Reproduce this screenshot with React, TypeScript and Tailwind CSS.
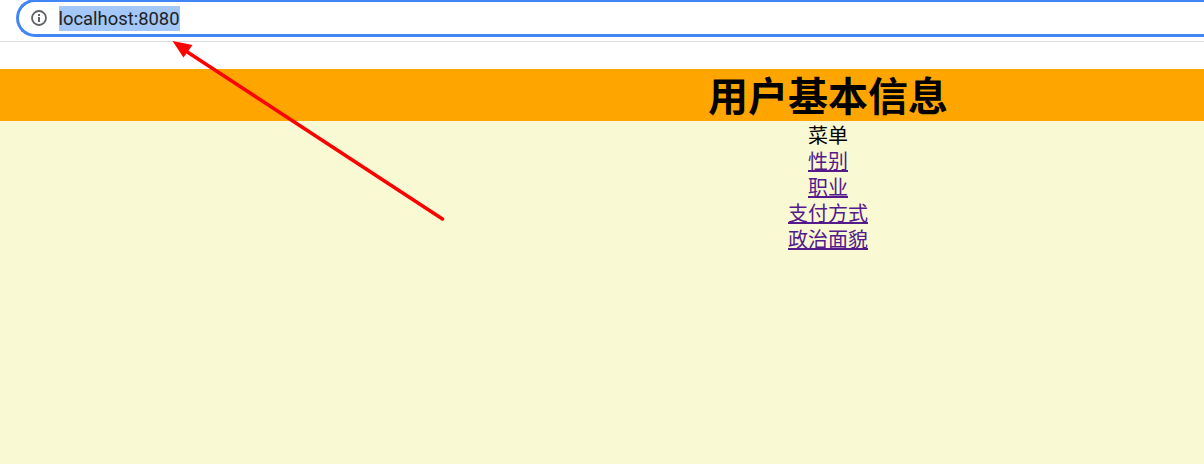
export default function App() {
  const cjk = { fontFamily: '"Liberation Sans", "Noto Sans CJK SC", sans-serif' };
  return (
    <div className="relative flex h-[464px] w-[1204px] flex-col overflow-hidden bg-white" style={cjk}>
      <div className="h-[42px] shrink-0 border-b border-[#dadce0]">
        <div className="ml-[16px] -mt-px flex h-[38px] items-center rounded-l-[19px] border-[3px] border-r-0 border-[#4285f4] pl-[10.5px]">
          <svg width="18" height="18" viewBox="0 0 18 18" fill="none" className="shrink-0">
            <circle cx="9" cy="9" r="7" stroke="#5f6368" strokeWidth="1.8" />
            <rect x="8" y="8" width="2" height="5" fill="#5f6368" />
            <rect x="8" y="5" width="2" height="2" fill="#5f6368" />
          </svg>
          <span className="ml-[11px] bg-[#a3c7f7] text-[18.4px] leading-[25px] text-[#202124]" style={{ fontFamily: '"Roboto", sans-serif' }}>
            localhost:8080
          </span>
        </div>
      </div>
      <div className="h-[27px] shrink-0" />
      <div className="flex h-[52px] shrink-0 items-center justify-center bg-[#ffa500] pt-[4px] pl-[452px]">
        <h1 className="text-[40px] leading-[48px] font-bold text-black">用户基本信息</h1>
      </div>
      <div className="flex flex-1 flex-col items-center bg-[#f9f9d3] pt-[2px] pl-[452px] text-[20px] leading-[26px] text-black">
        <div>菜单</div>
        <a href="#" className="text-[#551a8b] underline">性别</a>
        <a href="#" className="text-[#551a8b] underline">职业</a>
        <a href="#" className="text-[#551a8b] underline">支付方式</a>
        <a href="#" className="text-[#551a8b] underline">政治面貌</a>
      </div>
      <svg className="pointer-events-none absolute top-0 left-0" width="1204" height="464" viewBox="0 0 1204 464">
        <line x1="442.5" y1="219" x2="182" y2="48.5" stroke="#ff0000" strokeWidth="3.5" strokeLinecap="round" />
        <polygon points="172.5,41 192.5,45 183.5,57.5" fill="#ff0000" />
      </svg>
    </div>
  );
}
